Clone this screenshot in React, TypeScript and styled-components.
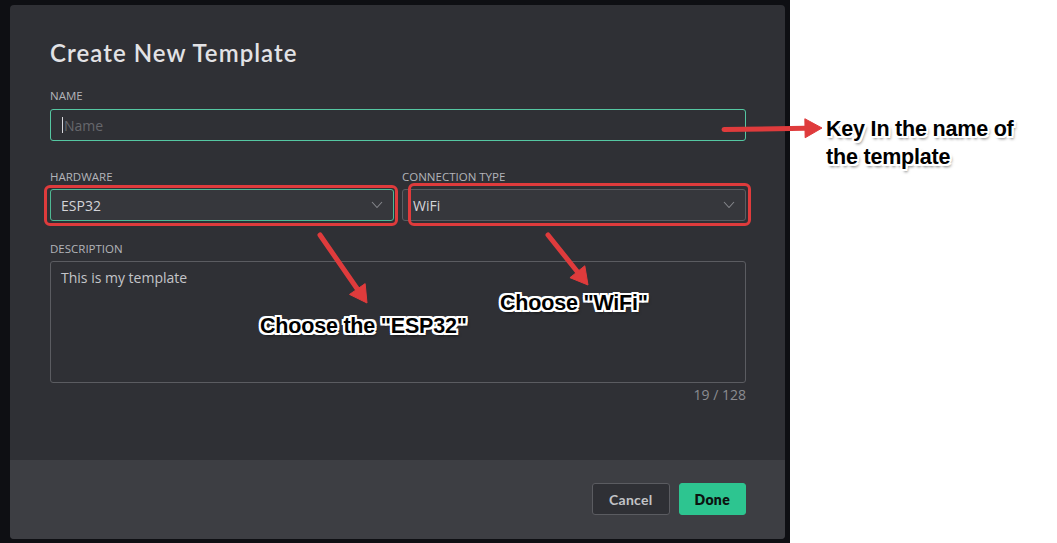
import React from 'react'
import styled, { createGlobalStyle } from 'styled-components'

const GlobalStyle = createGlobalStyle`
    html, body {
        margin: 0;
        padding: 0;
        background: #ffffff;
    }
    * {
        box-sizing: border-box;
    }
`

const UI_FONT = `'Open Sans', 'Noto Sans', sans-serif`
const HEAD_FONT = `Lato, 'Open Sans', sans-serif`
const NOTE_FONT = `'Liberation Sans', Arial, sans-serif`
const RED = '#df3b3c'

const Page = styled.div`
    position: relative;
    display: flex;
    width: 1057px;
    height: 543px;
    overflow: hidden;
`

const Backdrop = styled.div`
    display: flex;
    width: 790px;
    height: 543px;
    padding: 5px 5px 4px 10px;
    background: #0e0f13;
`

const Dialog = styled.div`
    display: flex;
    flex-direction: column;
    width: 775px;
    height: 534px;
    background: #2f3035;
    border-radius: 4px;
    overflow: hidden;
`

const Body = styled.div`
    flex: 1;
    padding: 32px 39px 0 40px;
`

const Title = styled.h1`
    margin: 0;
    font-family: ${HEAD_FONT};
    font-weight: 600;
    font-size: 24px;
    line-height: 32px;
    color: #e2e2e5;
    letter-spacing: 1.05px;
`

const Field = styled.div<{ $gap: number }>`
    margin-top: ${p => p.$gap}px;
`

const Label = styled.div<{ $below?: number }>`
    font-family: ${UI_FONT};
    font-size: 11.5px;
    line-height: 14px;
    color: #b3b4b9;
    text-transform: uppercase;
    margin-bottom: ${p => p.$below ?? 5}px;
`

const Row = styled.div`
    display: grid;
    grid-template-columns: 1fr 1fr;
    gap: 8px;
`

const TextBox = styled.div`
    position: relative;
    display: flex;
    align-items: center;
    height: 32px;
    padding: 0 11px;
    border: 1px solid #55c7a2;
    border-radius: 3px;
    background: #2f3035;
    font-family: ${UI_FONT};
    font-size: 14px;
    color: #66676c;
`

const Caret = styled.span`
    width: 1px;
    height: 16px;
    background: #d8d8dc;
    margin-right: 1px;
`

const Select = styled.div<{ $focused?: boolean }>`
    position: relative;
    display: flex;
    align-items: center;
    justify-content: space-between;
    height: 32px;
    padding: 0 10px;
    border: 1px solid ${p => (p.$focused ? '#4fb994' : '#5b5c61')};
    border-radius: 3px;
    background: #36373c;
    font-family: ${UI_FONT};
    font-size: 14px;
    color: #d4d4d8;
`

const Highlight = styled.div<{ $t: number; $r: number; $b: number; $l: number }>`
    position: absolute;
    top: ${p => p.$t}px;
    right: ${p => p.$r}px;
    bottom: ${p => p.$b}px;
    left: ${p => p.$l}px;
    border: 3px solid ${RED};
    border-radius: 6px;
    pointer-events: none;
`

const TextArea = styled.div`
    height: 122px;
    padding: 6px 10px;
    border: 1px solid #5b5c61;
    border-radius: 3px;
    font-family: ${UI_FONT};
    font-size: 14px;
    line-height: 20px;
    color: #c4c5c9;
`

const Counter = styled.div`
    margin-top: 3px;
    text-align: right;
    font-family: ${UI_FONT};
    font-size: 14px;
    line-height: 18px;
    color: #8b8c91;
`

const Footer = styled.div`
    display: flex;
    justify-content: flex-end;
    align-items: center;
    gap: 9px;
    height: 79px;
    padding: 0 39px 1px 0;
    background: #3d3e43;
`

const Button = styled.button<{ $primary?: boolean }>`
    height: 32px;
    padding: 0 ${p => (p.$primary ? 15 : 16)}px;
    border-radius: 3px;
    border: 1px solid ${p => (p.$primary ? '#2dc590' : '#5b5c61')};
    background: ${p => (p.$primary ? '#2dc590' : '#2f3035')};
    color: ${p => (p.$primary ? '#0c1410' : '#c2c3c7')};
    font-family: ${HEAD_FONT};
    font-weight: ${p => (p.$primary ? 800 : 700)};
    font-size: 14px;
    letter-spacing: 0.3px;
    cursor: pointer;
`

const Overlay = styled.svg`
    position: absolute;
    left: 0;
    top: 0;
    pointer-events: none;
`

const Note = styled.div<{ $x: number; $y: number }>`
    position: absolute;
    left: ${p => p.$x}px;
    top: ${p => p.$y}px;
    font-family: ${NOTE_FONT};
    font-weight: 700;
    font-size: 21.5px;
    line-height: 28px;
    letter-spacing: -0.2px;
    color: #000000;
    white-space: nowrap;
    text-shadow:
        -2px 0 0 #fff, 2px 0 0 #fff, 0 -2px 0 #fff, 0 2px 0 #fff,
        -2px -2px 0 #fff, 2px -2px 0 #fff, -2px 2px 0 #fff, 2px 2px 0 #fff,
        2px 3px 3px rgba(0, 0, 0, 0.55);
`

const Chevron = () => (
    <svg width="12" height="8" viewBox="0 0 12 8">
        <polyline points="1,1 6,6.5 11,1" fill="none" stroke="#85868b" strokeWidth="1.1" />
    </svg>
)

const Arrow = ({ x1, y1, x2, y2 }: { x1: number; y1: number; x2: number; y2: number }) => {
    const a = Math.atan2(y2 - y1, x2 - x1)
    const len = 17
    const half = 9.5
    const bx = x2 - Math.cos(a) * len
    const by = y2 - Math.sin(a) * len
    const px = -Math.sin(a) * half
    const py = Math.cos(a) * half
    return (
        <g fill={RED} stroke={RED}>
            <line x1={x1} y1={y1} x2={bx} y2={by} strokeWidth="5" strokeLinecap="round" />
            <polygon points={`${x2},${y2} ${bx + px},${by + py} ${bx - px},${by - py}`} strokeWidth="1" strokeLinejoin="round" />
        </g>
    )
}

export default function App() {
    return (
        <>
            <GlobalStyle />
            <Page>
                <Backdrop>
                    <Dialog>
                        <Body>
                            <Title>Create New Template</Title>
                            <Field $gap={20}>
                                <Label $below={6}>Name</Label>
                                <TextBox>
                                    <Caret />
                                    Name
                                </TextBox>
                            </Field>
                            <Row>
                                <Field $gap={29}>
                                    <Label>Hardware</Label>
                                    <Select $focused>
                                        ESP32
                                        <Chevron />
                                        <Highlight $t={-5} $r={-5} $b={-6} $l={-7} />
                                    </Select>
                                </Field>
                                <Field $gap={29}>
                                    <Label>Connection Type</Label>
                                    <Select>
                                        WiFi
                                        <Chevron />
                                        <Highlight $t={-7} $r={-6} $b={-6} $l={5} />
                                    </Select>
                                </Field>
                            </Row>
                            <Field $gap={21}>
                                <Label>Description</Label>
                                <TextArea>This is my template</TextArea>
                                <Counter>19 / 128</Counter>
                            </Field>
                        </Body>
                        <Footer>
                            <Button>Cancel</Button>
                            <Button $primary>Done</Button>
                        </Footer>
                    </Dialog>
                </Backdrop>
                <Overlay width="1057" height="543">
                    <Arrow x1={724} y1={129.5} x2={822} y2={128} />
                    <Arrow x1={320} y1={235} x2={367} y2={303} />
                    <Arrow x1={548} y1={235} x2={588} y2={285} />
                </Overlay>
                <Note $x={826} $y={115}>
                    Key In the name of
                    <br />
                    the template
                </Note>
                <Note $x={260} $y={312}>Choose the "ESP32"</Note>
                <Note $x={500} $y={289}>Choose "WiFi"</Note>
            </Page>
        </>
    )
}
